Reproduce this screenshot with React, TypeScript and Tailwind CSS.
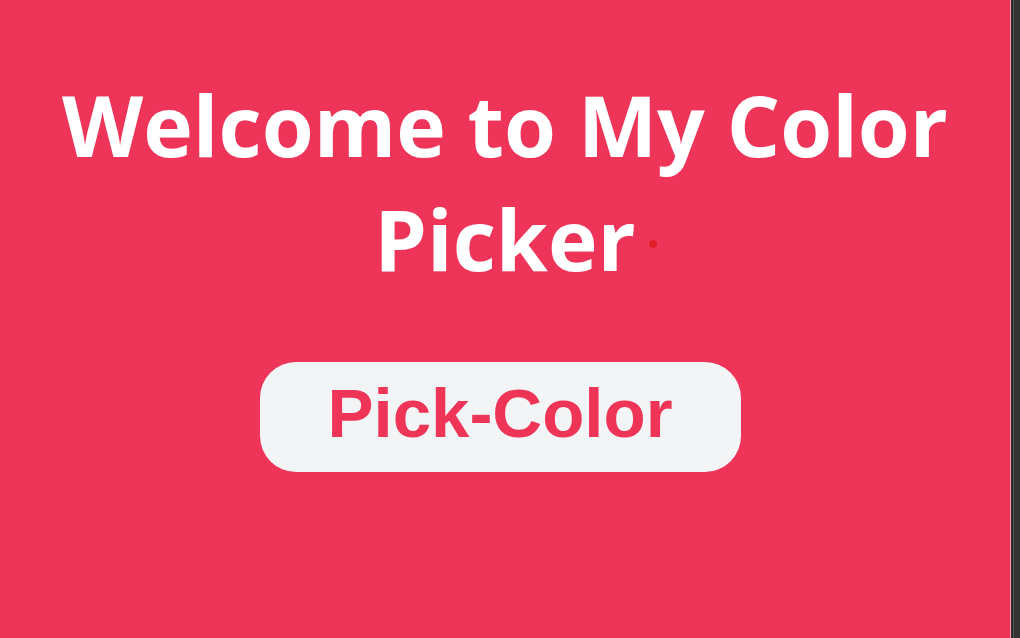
export default function App() {
  return (
    <div className="relative flex h-[638px] w-[1020px] overflow-hidden bg-[#ef3459]">
      <main className="flex flex-1 flex-col items-center pt-[68px]">
        <h1 className="w-[900px] text-center font-['Open_Sans',sans-serif] text-[84px] font-bold leading-[114px] text-white">
          Welcome to My Color Picker
        </h1>
        <button className="mt-[66px] mr-[10px] h-[110px] w-[481px] rounded-[36px] bg-[#f3f4f6] pb-[6px] font-['Liberation_Sans',Arial,sans-serif] text-[69px] leading-[98px] font-bold text-[#ee3457]">
          Pick-Color
        </button>
      </main>
      <span className="absolute left-[649px] top-[240px] h-[8px] w-[8px] rounded-full bg-[#e01f2b]" />
      <div className="flex w-[10px] shrink-0">
        <div className="w-[1px] bg-[#f59bb0]" />
        <div className="w-[2px] bg-[#2b2b2b]" />
        <div className="w-[1px] bg-[#555]" />
        <div className="flex-1 bg-[#333]" />
      </div>
    </div>
  );
}
